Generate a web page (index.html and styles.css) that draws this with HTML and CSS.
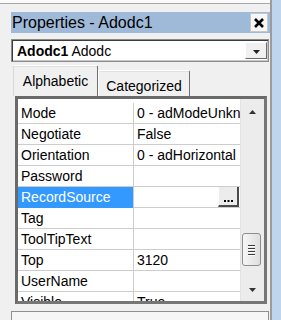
FILE: index.html
```html
<!DOCTYPE html>
<html>
<head>
<meta charset="utf-8">
<link rel="stylesheet" href="styles.css">
</head>
<body>
<div class="app">
  <div class="panel">
    <div class="topstrip"></div>
    <div class="titlebar">
      <span class="title">Properties - Adodc1</span>
      <span class="close"><svg width="10" height="10" viewBox="0 0 10 10"><path d="M1 1 L9 9 M9 1 L1 9" stroke="#000" stroke-width="2.6" fill="none"/></svg></span>
    </div>
    <div class="combo">
      <span class="cbtext"><b>Adodc1</b> Adodc</span>
      <span class="dropbtn"><svg width="7" height="4" viewBox="0 0 7 4"><path d="M0 0 H7 L3.5 4 Z" fill="#222"/></svg></span>
    </div>
    <div class="tabs">
      <div class="tab active">Alphabetic</div>
      <div class="tab">Categorized</div>
    </div>
    <div class="gridframe">
      <div class="rows">
        <div class="row"><div class="name">Mode</div><div class="val">0 - adModeUnknown</div></div>
        <div class="row"><div class="name">Negotiate</div><div class="val">False</div></div>
        <div class="row"><div class="name">Orientation</div><div class="val">0 - adHorizontal</div></div>
        <div class="row"><div class="name">Password</div><div class="val"></div></div>
        <div class="row"><div class="name sel">RecordSource</div><div class="val btncell"><span class="dots"><svg width="9" height="2" viewBox="0 0 9 2"><rect x="0" y="0" width="2" height="2" fill="#000"/><rect x="3.5" y="0" width="2" height="2" fill="#000"/><rect x="7" y="0" width="2" height="2" fill="#000"/></svg></span></div></div>
        <div class="row"><div class="name">Tag</div><div class="val"></div></div>
        <div class="row"><div class="name">ToolTipText</div><div class="val"></div></div>
        <div class="row"><div class="name">Top</div><div class="val">3120</div></div>
        <div class="row"><div class="name">UserName</div><div class="val"></div></div>
        <div class="row"><div class="name">Visible</div><div class="val">True</div></div>
      </div>
      <div class="vscroll">
        <div class="sbtn up"><svg width="7" height="4" viewBox="0 0 7 4"><path d="M0 4 H7 L3.5 0 Z" fill="#333"/></svg></div>
        <div class="track"><div class="thumb"><i></i><i></i><i></i><i></i></div></div>
        <div class="sbtn down"><svg width="7" height="4" viewBox="0 0 7 4"><path d="M0 0 H7 L3.5 4 Z" fill="#333"/></svg></div>
      </div>
    </div>
    <div class="desc"></div>
  </div>
  <div class="edge"></div>
</div>
</body>
</html>
```

FILE: styles.css
```css
* { box-sizing: border-box; }
body {
  margin: 0;
  background: #f0f0f0;
  font-family: "Liberation Sans", Arial, sans-serif;
  color: #000;
}
.app {
  display: flex;
  width: 281px;
  height: 320px;
  overflow: hidden;
}
.panel {
  width: 272px;
  border-right: 2px solid #9c9c9c;
  background: #f0f0f0;
  display: flex;
  flex-direction: column;
}
.edge {
  flex: 1;
  background: #bfd5ee;
}
.topstrip {
  height: 4px;
  flex: none;
  background: #fbfbfb;
  border-bottom: 1px solid #a8a8a8;
}
.titlebar {
  flex: none;
  margin: 8px 0 0 11px;
  height: 21px;
  background: #9fbad8;
  display: flex;
  align-items: center;
  justify-content: space-between;
}
.title {
  font-size: 16px;
  line-height: 21px;
  padding-left: 1px;
}
.close {
  width: 18px;
  height: 19px;
  margin-right: 2px;
  background: #f6f6f6;
  border: 1px solid #c8c8c8;
  display: flex;
  align-items: center;
  justify-content: center;
}
.combo {
  flex: none;
  margin: 6px 1px 0 11px;
  height: 23px;
  background: #fff;
  border: 1px solid #8c8c8c;
  box-shadow: inset 1px 1px 0 #3c3c3c, inset -1px -1px 0 #c8c8c8;
  display: flex;
  align-items: center;
  justify-content: space-between;
}
.cbtext {
  font-size: 14px;
  padding-left: 5px;
  padding-top: 1px;
}
.dropbtn {
  width: 22px;
  height: 17px;
  margin-right: 1px;
  background: #f0f0f0;
  border-top: 1px solid #fff;
  border-left: 1px solid #fff;
  border-right: 1px solid #6a6a6a;
  border-bottom: 1px solid #6a6a6a;
  display: flex;
  align-items: center;
  justify-content: center;
  padding-top: 2px;
}
.tabs {
  flex: none;
  margin: 3px 0 0 13px;
  height: 31px;
  display: flex;
  align-items: flex-end;
}
.tab {
  font-size: 14px;
  height: 26px;
  width: 92px;
  border-top: 1px solid #fff;
  border-left: 1px solid #fff;
  border-right: 1px solid #707070;
  border-radius: 2px 2px 0 0;
  box-shadow: inset 0 1px 0 #e0e0e0;
  display: flex;
  justify-content: center;
  padding-top: 7px;
}
.tab.active {
  height: 31px;
  width: 85px;
  padding-top: 7px;
  border-left-color: #d8d8d8;
}
.gridframe {
  flex: none;
  margin-left: 15px;
  width: 252px;
  height: 208px;
  border: 3px solid #767676;
  border-top-color: #6a6a6a;
  border-left-color: #6a6a6a;
  display: flex;
  overflow: hidden;
}
.rows {
  width: 222px;
  background: #fff;
  padding-top: 4px;
  overflow: hidden;
}
.row {
  height: 21px;
  display: grid;
  grid-template-columns: 116px 1fr;
  border-bottom: 1px solid #cdcdcd;
  font-size: 14px;
  line-height: 20px;
}
.name {
  padding-left: 3px;
  border-right: 1px solid #cdcdcd;
  white-space: nowrap;
  overflow: hidden;
}
.name.sel {
  background: #3399ff;
  color: #fff;
  margin-bottom: -1px;
}
.val {
  padding-left: 3px;
  white-space: nowrap;
  overflow: hidden;
  display: flex;
}
.val.btncell {
  justify-content: flex-end;
  padding-left: 0;
}
.dots {
  width: 21px;
  height: 21px;
  margin: -1px 1px -1px 0;
  background: #ececec;
  border-top: 1px solid #fff;
  border-left: 1px solid #fff;
  border-right: 2px solid #4a4a4a;
  border-bottom: 2px solid #4a4a4a;
  display: flex;
  align-items: flex-end;
  justify-content: center;
  padding-bottom: 3px;
}
.dots svg { display: block; }
.vscroll {
  flex: 1;
  background: #ececec;
  border-left: 1px solid #e2e2e2;
  display: flex;
  flex-direction: column;
}
.sbtn {
  display: flex;
  align-items: center;
  justify-content: center;
}
.sbtn.up { height: 26px; }
.sbtn.down { height: 22px; margin-bottom: 0; }
.track {
  flex: 1;
  padding-top: 108px;
}
.thumb {
  margin-left: 1px;
  width: 19px;
  height: 33px;
  border: 1px solid #8e8e8e;
  border-radius: 3px;
  background: linear-gradient(to right, #f6f6f6, #dedede);
  display: flex;
  flex-direction: column;
  align-items: center;
  justify-content: center;
  gap: 1px;
}
.thumb i {
  display: block;
  width: 7px;
  height: 1px;
  background: #3a3a3a;
  box-shadow: 0 1px 0 #ffffff;
  margin: 0.5px 0;
}
.desc {
  flex: none;
  margin: 7px 1px 0 11px;
  height: 20px;
  background: #f6f6f6;
  border: 1px solid #8e8e8e;
}
```
